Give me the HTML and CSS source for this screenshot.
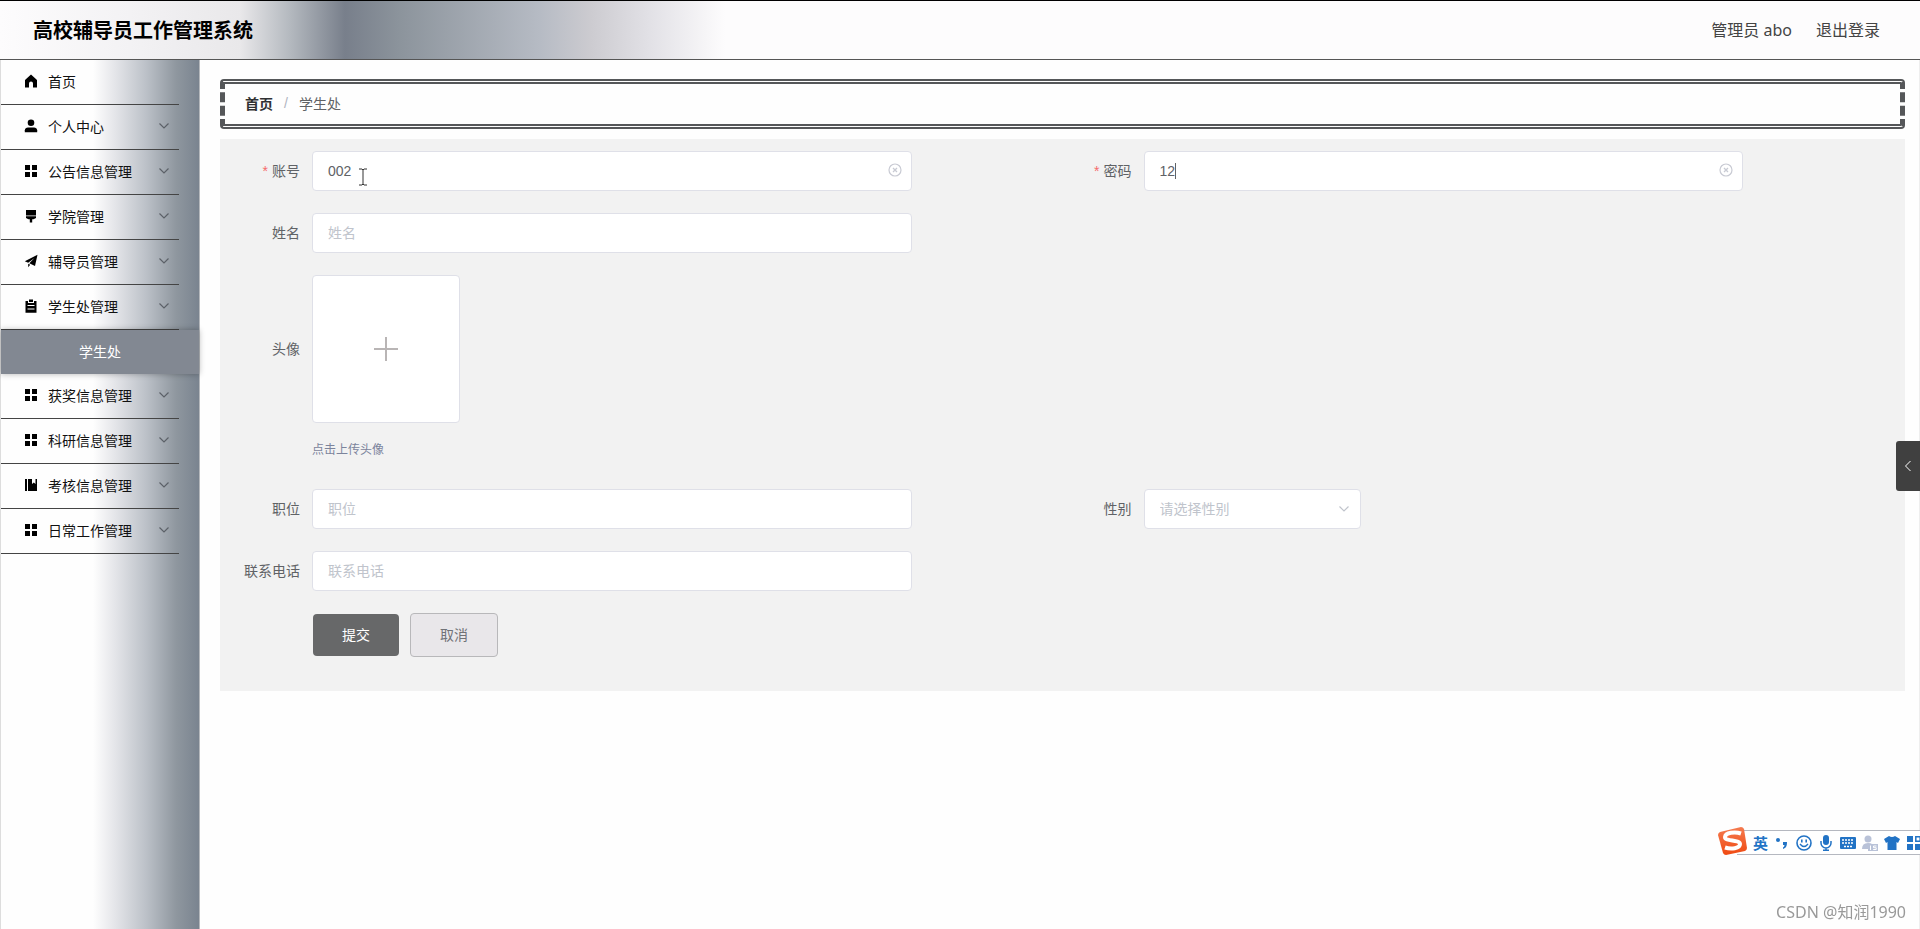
FILE: index.html
```html
<!doctype html>
<html lang="zh-CN">
  <head>
    <meta charset="UTF-8" />
    <meta name="viewport" content="width=device-width, initial-scale=1.0" />
    <title>高校辅导员工作管理系统</title>
    <link rel="stylesheet" href="styles.css">
  </head>
  <body>
    <svg class="sprite" aria-hidden="true">
      <symbol id="i-grid" viewBox="0 0 14 14"><path d="M1 1h5v5H1zM8 1h5v5H8zM1 8h5v5H1zM8 8h5v5H8z" /></symbol>
      <symbol id="i-down" viewBox="0 0 12 12"><path d="M1.500 3.500 6 8l4.500-4.500" fill="none" stroke="currentColor" stroke-width="1.200" /></symbol>
      <symbol id="i-clear" viewBox="0 0 14 14"><circle cx="7" cy="7" r="6" fill="none" stroke="currentColor" stroke-width="1.200" /><path d="m5 5 4 4M9 5 5 9" stroke="currentColor" stroke-width="1.300" /></symbol>
    </svg>

    <header class="navbar">
      <h1 class="title">高校辅导员工作管理系统</h1>
      <div class="user">
        <span>管理员 abo</span>
        <a href="#">退出登录</a>
      </div>
    </header>

    <div class="container">
      <nav class="sidebar">
        <ul class="menu">
          <li><a class="menu-item" href="#"><svg class="icon" viewBox="0 0 14 14"><path d="M7 0.500 13 6v7.500H9V9.500a2 2 0 0 0-4 0v4H1V6z" /></svg><span>首页</span></a></li>
          <li><a class="menu-item" href="#"><svg class="icon" viewBox="0 0 14 14"><circle cx="7" cy="3.800" r="3.300" /><path d="M.8 13.300v-2A3.300 3.300 0 0 1 4 8.500h6a3.300 3.300 0 0 1 3.200 2.800v2z" /></svg><span>个人中心</span><svg class="arrow"><use href="#i-down" /></svg></a></li>
          <li><a class="menu-item" href="#"><svg class="icon"><use href="#i-grid" /></svg><span>公告信息管理</span><svg class="arrow"><use href="#i-down" /></svg></a></li>
          <li><a class="menu-item" href="#"><svg class="icon" viewBox="0 0 14 14"><path d="M2 1h10v5.500H2zM2 7.300h10V9L9.500 10.200H8.200V13.500H5.800V10.200H4.500L2 9z" /></svg><span>学院管理</span><svg class="arrow"><use href="#i-down" /></svg></a></li>
          <li><a class="menu-item" href="#"><svg class="icon" viewBox="0 0 14 14"><path d="M13.500.8.8 7.200l3.400 1.600L10.500 4 5.300 9.300l5.700 2.600zM4.200 9.800v3.500l2-2.500z" /></svg><span>辅导员管理</span><svg class="arrow"><use href="#i-down" /></svg></a></li>
          <li><a class="menu-item" href="#"><svg class="icon" viewBox="0 0 14 14"><path fill-rule="evenodd" d="M1.500 2H4v2h6V2h2.500v11.700h-11zM3.500 6v1h7V6zM3.500 9.500v1h7v-1zM5 .5h4V3H5z" /></svg><span>学生处管理</span><svg class="arrow"><use href="#i-down" /></svg></a>
            <ul class="submenu">
              <li><a href="#">学生处</a></li>
            </ul>
          </li>
          <li><a class="menu-item" href="#"><svg class="icon"><use href="#i-grid" /></svg><span>获奖信息管理</span><svg class="arrow"><use href="#i-down" /></svg></a></li>
          <li><a class="menu-item" href="#"><svg class="icon"><use href="#i-grid" /></svg><span>科研信息管理</span><svg class="arrow"><use href="#i-down" /></svg></a></li>
          <li><a class="menu-item" href="#"><svg class="icon" viewBox="0 0 14 14"><path d="M1 1h2v12H1zM4 1h4v5l1.800-1.500L11.500 6V1H13v12H4z" /></svg><span>考核信息管理</span><svg class="arrow"><use href="#i-down" /></svg></a></li>
          <li><a class="menu-item" href="#"><svg class="icon"><use href="#i-grid" /></svg><span>日常工作管理</span><svg class="arrow"><use href="#i-down" /></svg></a></li>
        </ul>
      </nav>

      <main class="main">
        <div class="breadcrumb">
          <a href="#">首页</a>
          <span class="separator">/</span>
          <span>学生处</span>
        </div>

        <form class="form">
          <div class="form-item">
            <label for="account" class="required">账号</label>
            <div class="field">
              <input type="text" id="account" value="002" />
              <button type="button" class="clear" aria-label="清空"><svg><use href="#i-clear" /></svg></button>
            </div>
          </div>
          <div class="form-item">
            <label for="password" class="required">密码</label>
            <div class="field">
              <input type="text" id="password" value="12" />
              <span class="caret"></span>
              <button type="button" class="clear" aria-label="清空"><svg><use href="#i-clear" /></svg></button>
            </div>
          </div>
          <div class="form-item first">
            <label for="name">姓名</label>
            <div class="field"><input type="text" id="name" placeholder="姓名" /></div>
          </div>
          <div class="form-item first">
            <label for="avatar">头像</label>
            <button type="button" id="avatar" class="upload">
              <svg viewBox="0 0 24 24"><path d="M12 0v24M0 12h24" fill="none" stroke="currentColor" stroke-width="2" /></svg>
            </button>
            <p class="tip">点击上传头像</p>
          </div>
          <div class="form-item first">
            <label for="job">职位</label>
            <div class="field"><input type="text" id="job" placeholder="职位" /></div>
          </div>
          <div class="form-item">
            <label for="sex">性别</label>
            <div class="field select">
              <select id="sex">
                <option>请选择性别</option>
              </select>
              <svg class="arrow"><use href="#i-down" /></svg>
            </div>
          </div>
          <div class="form-item first">
            <label for="phone">联系电话</label>
            <div class="field"><input type="text" id="phone" placeholder="联系电话" /></div>
          </div>
          <div class="buttons">
            <button type="submit" class="btn-submit">提交</button>
            <button type="button" class="btn-cancel">取消</button>
          </div>
        </form>
      </main>
    </div>

    <svg class="pointer" viewBox="0 0 10 18"><path d="M1 1h3l1 1 1-1h3M5 2v14M1 17h3l1-1 1 1h3" fill="none" stroke="#333" /></svg>

    <button type="button" class="drawer" aria-label="展开">
      <svg viewBox="0 0 12 12"><path d="M8.500 1 3.500 6l5 5" fill="none" stroke="#fff" /></svg>
    </button>

    <div class="ime">
      <svg class="ime-logo" viewBox="0 0 30 30">
        <defs>
          <linearGradient id="orange" x2="0" y2="1"><stop stop-color="#f47b50" /><stop offset="1" stop-color="#f04a12" /></linearGradient>
        </defs>
        <path d="M3 6 24 1q2 0 3 2l3 19q0 2-2 3L9 29q-2 0-3-2L1 9q0-2 2-3z" fill="url(#orange)" />
        <path d="M24 7.500C18 5.500 8.500 6.500 8 11c-.5 4.500 15 2.500 15 7 0 4.500-9 5.500-15 3.500" fill="none" stroke="#fff" stroke-width="4" />
      </svg>
      <span class="ime-lang">英</span>
      <svg viewBox="0 0 16 16"><circle cx="4" cy="5" r="2" /><path d="M9 7h4c0 4-1 6-4 7v-1.500q1.500-1 1.500-2.500H9z" /></svg>
      <svg viewBox="0 0 16 16"><circle cx="8" cy="8" r="7" fill="none" stroke="currentColor" stroke-width="1.600" /><path d="M5 4.500h1.600v3H5zM9.400 4.500H11v3H9.400z" /><path d="M4 9q4 5 8 0" fill="none" stroke="currentColor" stroke-width="1.400" /></svg>
      <svg viewBox="0 0 16 16"><rect x="5" y="0" width="6" height="10" rx="3" /><path d="M3 6v2a5 5 0 0 0 10 0V6M8 13v3M5 15.300h6" fill="none" stroke="currentColor" stroke-width="1.500" /></svg>
      <svg viewBox="0 0 16 16"><rect y="2" width="16" height="12" rx="1" /><path d="M2 5h12M2 8h12M4 11.500h8" fill="none" stroke="#fff" stroke-width="1.600" stroke-dasharray="2 1" /></svg>
      <svg class="muted" viewBox="0 0 16 16"><circle cx="6" cy="4" r="3.500" /><path d="M0 14q0-6 6-6 3 0 4 1H6v5z" /><path d="M6 9h10v7H6z" /><path d="M8.500 10.500V15M14.500 11h-3v1.700h2.700v1.800h-3" fill="none" stroke="#fff" /></svg>
      <svg viewBox="0 0 16 16"><path d="M5 1q3 2 6 0l5 3-2 4-1.500-1v8h-9V7L2 8 0 4z" /></svg>
      <svg viewBox="0 0 16 16"><path d="M1 1h6v6H1zM1 9h6v6H1zM9 9h6v6H9z" /><path d="M9.800 1.800h4.400v4.400H9.800z" fill="none" stroke="currentColor" stroke-width="1.500" /></svg>
    </div>

    <div class="watermark">CSDN @知润1990</div>
  </body>
</html>
```

FILE: styles.css
```css
* {
  box-sizing: border-box;
}
body {
  margin: 0;
  min-height: 100vh;
  display: flex;
  flex-direction: column;
  font-family: "Liberation Sans", "Noto Sans CJK SC", sans-serif;
  font-size: 14px;
  color: #606266;
  background: #fefefe;
}
a {
  color: inherit;
  text-decoration: none;
}
ul {
  list-style: none;
  margin: 0;
  padding: 0;
}
button,
input,
select {
  font: inherit;
}
svg {
  fill: currentColor;
}
.sprite {
  display: none;
}

.navbar {
  display: flex;
  align-items: center;
  justify-content: space-between;
  height: 60px;
  padding: 0 40px 2px 33px;
  border-top: 1px solid #000;
  border-bottom: 1px solid #555;
  background: linear-gradient(90deg, #fdfcfd 0, #f3f2f4 130px, #e9e8ea 240px, #b4b9bf 290px, #787f8b 345px, #8c949c 400px, #b6bbc4 540px, #cccbd0 590px, #e2e1e6 650px, #fdfcfd 725px);
}
.title {
  margin: 0;
  font-size: 20px;
  color: #000;
}
.user {
  display: flex;
  gap: 24px;
  font-family: "Noto Sans", "Noto Sans CJK SC", sans-serif;
  font-size: 16px;
  color: #444;
}

.container {
  flex: 1;
  display: flex;
}
.sidebar {
  width: 200px;
  flex-shrink: 0;
  border-left: 1px solid #ddd;
  border-right: 1px solid #b5b8bc;
  background: linear-gradient(90deg, #fefefe 92px, #e3e4e8 115px, #bcc1c8 145px, #8f979f 175px, #78828e 200px);
}
.menu-item {
  display: flex;
  align-items: center;
  height: 45px;
  margin-right: 20px;
  padding: 0 9px 2px 23px;
  border-bottom: 1px solid #444;
  color: #111;
}
.icon {
  width: 14px;
  height: 14px;
  margin-right: 10px;
  color: #000;
}
.arrow {
  width: 12px;
  height: 12px;
  margin-left: auto;
  color: #5c6168;
}
.submenu a {
  display: flex;
  align-items: center;
  justify-content: center;
  height: 44px;
  padding-bottom: 2px;
  color: #fff;
  background: #828892;
  box-shadow: 0 0 6px rgba(0, 0, 0, 0.3);
}

.main {
  flex: 1;
  padding: 19px 14px 0 20px;
  border-right: 1px solid #eee;
}
.breadcrumb {
  display: flex;
  align-items: center;
  gap: 11px;
  height: 50px;
  padding: 0 20px 2px;
  border: 5px solid #555759;
  border-style: double dashed;
  border-radius: 4px;
}
.breadcrumb a {
  font-weight: bold;
  color: #303133;
}
.separator {
  color: #b0b4c0;
}

.form {
  display: grid;
  grid-template-columns: 1fr 1fr;
  gap: 22px 0;
  margin-top: 10px;
  padding: 12px 12px 34px 10px;
  background: #f2f2f2;
}
.form-item {
  display: grid;
  grid-template-columns: 82px 1fr;
  align-items: center;
}
.first {
  grid-column: 1;
}
.form-item label {
  padding: 0 12px 2px 0;
  text-align: right;
}
.required::before {
  content: "*";
  margin-right: 4px;
  color: #f56c6c;
}
.field {
  position: relative;
  width: 80%;
}
.field input,
.field select {
  display: block;
  width: 100%;
  height: 40px;
  padding: 0 15px 1px;
  border: 1px solid #dfe0e8;
  border-radius: 4px;
  background: #fff;
  color: #606266;
  outline: none;
}
.field input::placeholder,
.field select {
  color: #c0c4cc;
}
.clear {
  position: absolute;
  top: 12px;
  right: 10px;
  width: 14px;
  height: 14px;
  padding: 0;
  border: 0;
  background: none;
  color: #c8cad3;
}
.clear svg {
  display: block;
  width: 14px;
  height: 14px;
}
.caret {
  position: absolute;
  top: 12px;
  left: 31px;
  width: 1px;
  height: 16px;
  background: #606266;
}
.select {
  width: 217px;
}
.field select {
  appearance: none;
}
.select .arrow {
  position: absolute;
  top: 14px;
  right: 11px;
  color: #c0c4cc;
}
.upload {
  display: flex;
  align-items: center;
  justify-content: center;
  width: 148px;
  height: 148px;
  border: 1px solid #dfe0e8;
  border-radius: 4px;
  background: #fff;
  color: #b9b5b5;
}
.upload svg {
  width: 24px;
  height: 24px;
}
.tip {
  grid-column: 2;
  margin: 17px 0 7px;
  font-size: 12px;
  line-height: 20px;
  color: #7c849c;
}
.buttons {
  grid-column: span 2;
  display: flex;
  align-items: center;
  gap: 11px;
  padding-left: 83px;
}
.btn-submit,
.btn-cancel {
  padding: 0 0 2px;
  border-radius: 4px;
}
.btn-submit {
  width: 86px;
  height: 42px;
  border: 0;
  background: #676869;
  color: #fff;
}
.btn-cancel {
  width: 88px;
  height: 44px;
  border: 1px solid #b8b8ba;
  background: #e9e7ea;
  color: #707277;
}

.pointer {
  position: fixed;
  top: 168px;
  left: 358px;
  width: 10px;
  height: 18px;
}
.drawer {
  position: fixed;
  top: 441px;
  right: 0;
  width: 24px;
  height: 50px;
  padding: 0 0 0 6px;
  border: 0;
  border-radius: 3px 0 0 3px;
  background: #404040;
}
.drawer svg {
  display: block;
  width: 12px;
  height: 12px;
}
.ime {
  position: fixed;
  right: -2px;
  bottom: 74px;
  display: flex;
  align-items: center;
  gap: 6px;
  height: 25px;
  border: 1px solid #b5b8c0;
  border-left: 0;
  border-right: 0;
  background: #fff;
  color: #2273c5;
}
.ime svg {
  width: 16px;
  height: 16px;
}
.ime .ime-logo {
  width: 30px;
  height: 30px;
  margin: 0 0 4px -20px;
}
.ime .muted {
  color: #b9c2d8;
}
.ime-lang {
  font-size: 15px;
  font-weight: bold;
}
.watermark {
  position: fixed;
  right: 14px;
  bottom: 6px;
  font-family: "Noto Sans", "Noto Sans CJK SC", sans-serif;
  font-size: 16px;
  color: #999;
}
```
